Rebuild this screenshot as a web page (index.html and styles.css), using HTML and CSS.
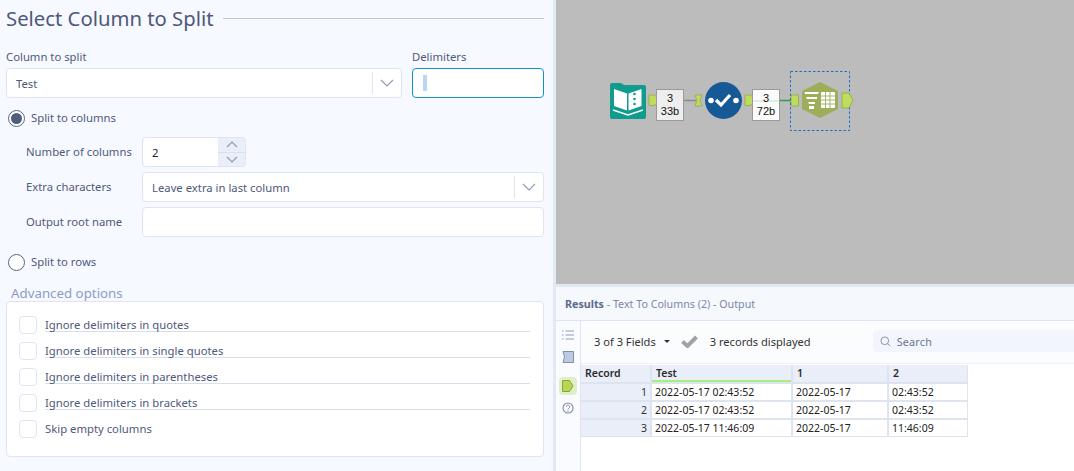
FILE: index.html
```html
<!DOCTYPE html>
<html lang="en">
<head>
<meta charset="utf-8">
<title>Text To Columns</title>
<link rel="stylesheet" href="styles.css">
</head>
<body>
<div class="app">
  <section class="config">
    <div class="title-row">
      <h1 class="title">Select Column to Split</h1>
      <span class="title-rule"></span>
    </div>
    <div class="top-fields">
      <div class="field-col">
        <label class="field-label">Column to split</label>
        <div class="select">
          <span class="select-value">Test</span>
          <span class="select-arrow"><svg width="14" height="8" viewBox="0 0 14 8"><path d="M1 1l6 6 6-6" class="chev"/></svg></span>
        </div>
      </div>
      <div class="field-col">
        <label class="field-label">Delimiters</label>
        <div class="input focused"><span class="caret"></span></div>
      </div>
    </div>
    <div class="radio-row first-radio">
      <span class="radio on"><span class="radio-dot"></span></span>
      <span class="radio-label">Split to columns</span>
    </div>
    <div class="sub-form">
      <span class="sub-label">Number of columns</span>
      <div class="spin">
        <span class="spin-value">2</span>
        <span class="spin-btns">
          <span class="spin-btn"><svg width="12" height="7" viewBox="0 0 12 7"><path d="M1 6l5-5 5 5" class="chev"/></svg></span>
          <span class="spin-btn"><svg width="12" height="7" viewBox="0 0 12 7"><path d="M1 1l5 5 5-5" class="chev"/></svg></span>
        </span>
      </div>
      <span class="sub-label">Extra characters</span>
      <div class="select">
        <span class="select-value">Leave extra in last column</span>
        <span class="select-arrow"><svg width="14" height="8" viewBox="0 0 14 8"><path d="M1 1l6 6 6-6" class="chev"/></svg></span>
      </div>
      <span class="sub-label">Output root name</span>
      <div class="input"></div>
    </div>
    <div class="radio-row second-radio">
      <span class="radio"></span>
      <span class="radio-label">Split to rows</span>
    </div>
    <div class="adv-title">Advanced options</div>
    <div class="adv-box">
      <div class="check-row"><span class="check"></span><span class="check-label ruled">Ignore delimiters in quotes</span></div>
      <div class="check-row"><span class="check"></span><span class="check-label ruled">Ignore delimiters in single quotes</span></div>
      <div class="check-row"><span class="check"></span><span class="check-label ruled">Ignore delimiters in parentheses</span></div>
      <div class="check-row"><span class="check"></span><span class="check-label ruled">Ignore delimiters in brackets</span></div>
      <div class="check-row"><span class="check"></span><span class="check-label">Skip empty columns</span></div>
    </div>
  </section>

  <section class="main">
    <div class="canvas">
      <svg class="workflow" width="518" height="284" viewBox="556 0 518 284">
        <!-- connections -->
        <path d="M684 100.500H696" class="wire-gray"/>
        <path d="M780 100.500H792" class="wire-green"/>
        <!-- input tool: book -->
        <path d="M610 85a2 2 0 0 1 2-2h9l3 2h20a2 2 0 0 1 2 2v30a2 2 0 0 1-2 2h-32a2 2 0 0 1-2-2z" fill="#0f9b8e"/>
        <path d="M614 89l13 4.500v17l-13-4.500z" fill="#fff"/>
        <path d="M628.500 93.500l13-4.500v17l-13 4.500z" fill="#fff"/>
        <path d="M613 110l15 5 15-5" fill="none" stroke="#fff" stroke-width="1.400"/>
        <circle cx="634.500" cy="94" r="1.300" fill="#0f9b8e"/><circle cx="634.500" cy="99" r="1.300" fill="#0f9b8e"/><circle cx="634.500" cy="104" r="1.300" fill="#0f9b8e"/>
        <path d="M649 95h5l3 2v6.500l-3 2h-5z" class="anchor"/>
        <!-- browse box 1 -->
        <rect x="656.500" y="89.500" width="27" height="31" fill="#eeeeee" stroke="#9a9a9a"/>
        <text x="670" y="101.500" class="count">3</text>
        <text x="670" y="114.500" class="count">33b</text>
        <path d="M695 95h7l-2 5.500 2 5.500h-7l2-5.500z" class="anchor"/>
        <!-- select tool -->
        <circle cx="723.500" cy="100.500" r="18.500" fill="#155a96"/>
        <circle cx="711" cy="100.500" r="2.800" fill="#fff"/>
        <circle cx="736" cy="100.500" r="2.800" fill="#fff"/>
        <path d="M716 100l5 5 9-10" fill="none" stroke="#fff" stroke-width="3.200"/>
        <path d="M745 95h5l3 2v6.500l-3 2h-5z" class="anchor"/>
        <!-- browse box 2 -->
        <rect x="752.500" y="89.500" width="27" height="31" fill="#fbfbfb" stroke="#9a9a9a"/>
        <rect x="753" y="100" width="26" height="2" fill="#dfeee2"/>
        <text x="766" y="101.500" class="count">3</text>
        <text x="766" y="114.500" class="count">72b</text>
        <path d="M791 95h7.500v11H791z" class="anchor"/>
        <!-- text to columns tool -->
        <path d="M820 82l18 9v18l-18 9-18-9V91z" fill="#9cae5a"/>
        <path d="M804.500 92h14.500l-1 2h-13zM806 97h11v2h-10zM808 102h7v2h-6zM809 106h5v3h-5z" fill="#fff"/>
        <rect x="821" y="92" width="14" height="16" rx="1" fill="#fff"/>
        <path d="M821 96h14M821 100h14M821 104h14M825.500 92v16M830 92v16" stroke="#9cae5a" stroke-width=".9"/>
        <rect x="790.500" y="71.500" width="59" height="59" fill="none" stroke="#1a6fc0" stroke-dasharray="2.500 2"/>
        <path d="M842 93h7l4 7.500-4 7.500h-7z" class="anchor"/>
      </svg>
    </div>
    <div class="results-bar">
      <span class="results-strong">Results</span><span class="results-path">&nbsp;- Text To Columns (2) - Output</span>
    </div>
    <div class="results-body">
      <aside class="side">
        <svg class="side-icon" width="14" height="12" viewBox="0 0 14 12"><path d="M1 2h1.500M1 6h1.500M1 10h1.500M4.500 2H13M4.500 6H13M4.500 10H13" stroke="#8ea0bd" stroke-width="1.200" fill="none"/></svg>
        <svg class="side-icon second" width="12" height="12" viewBox="0 0 12 12"><path d="M1 .5h10.500v11H1l1.500-5.500z" fill="#bcc9e0" stroke="#7f90ad"/></svg>
        <span class="side-active"><svg width="12" height="12" viewBox="0 0 12 12"><path d="M.5.5h7l3.500 5.500-3.500 5.500h-7z" fill="#b9d652" stroke="#8aa23c"/></svg></span>
        <svg class="side-icon" width="12" height="12" viewBox="0 0 12 12"><circle cx="6" cy="6" r="5" fill="none" stroke="#7f8ba3" stroke-width="1.100"/><path d="M4.300 4.700a1.700 1.700 0 1 1 2.600 1.500c-.6.400-.9.700-.9 1.200" fill="none" stroke="#7f8ba3"/><circle cx="6" cy="9" r=".7" fill="#7f8ba3"/></svg>
      </aside>
      <div class="results-main">
        <div class="toolbar">
          <span class="tb-text">3 of 3 Fields</span>
          <span class="tb-caret"></span>
          <svg class="tb-check" width="17" height="13" viewBox="0 0 17 13"><path d="M1.500 6.500l5 4.500L15.500 2" fill="none" stroke="#a3a3a3" stroke-width="4"/></svg>
          <span class="tb-text">3 records displayed</span>
          <div class="search">
            <svg width="11" height="11" viewBox="0 0 12 12"><circle cx="5.200" cy="5.200" r="4.200" fill="none" stroke="#7f8ba3"/><path d="M8.300 8.300L11 11" stroke="#7f8ba3"/></svg>
            <span class="search-text">Search</span>
          </div>
        </div>
        <div class="grid">
          <div class="th">Record</div><div class="th th-test">Test</div><div class="th">1</div><div class="th">2</div>
          <div class="rec">1</div><div class="td">2022-05-17 02:43:52</div><div class="td">2022-05-17</div><div class="td">02:43:52</div>
          <div class="rec">2</div><div class="td">2022-05-17 02:43:52</div><div class="td">2022-05-17</div><div class="td">02:43:52</div>
          <div class="rec">3</div><div class="td">2022-05-17 11:46:09</div><div class="td">2022-05-17</div><div class="td">11:46:09</div>
        </div>
      </div>
    </div>
  </section>
</div>
</body>
</html>
```
FILE: styles.css
```css
* { box-sizing: border-box; }
html, body { margin: 0; height: 100%; overflow: hidden; }
body { font-family: "Noto Sans", "Open Sans", sans-serif; font-size: 11.3px; color: #50597a; background: #fff; }
.app { display: flex; width: 1074px; height: 471px; }

.config { width: 553px; height: 471px; padding: 0 9px 0 6px; background: #f6f9ff; flex: none; }
.title-row { display: flex; align-items: center; gap: 10px; height: 37px; }
.title { margin: 0; font-size: 20.3px; font-weight: 400; line-height: 37px; color: #4f587a; white-space: nowrap; }
.title-rule { flex: 1; height: 1px; background: #c6c8cc; }

.top-fields { display: grid; grid-template-columns: 396px 132px; column-gap: 10px; margin-top: 11px; }
.field-label { display: block; height: 20px; line-height: 17px; }
.select, .input { height: 30px; background: #fff; border: 1px solid #dde5f3; border-radius: 4px; }
.select { display: flex; align-items: center; }
.select-value { flex: 1; padding-left: 9px; }
.select-arrow { width: 29px; height: 22px; border-left: 1px solid #dde5f3; display: flex; align-items: center; justify-content: center; }
.chev { fill: none; stroke: #8d9ab5; stroke-width: 1.100; }
.input.focused { border-color: #1590c6; display: flex; align-items: center; padding-left: 10px; }
.caret { width: 4px; height: 16px; background: #b7d6f8; }

.radio-row { display: flex; align-items: center; gap: 6px; padding-left: 2px; height: 18px; }
.radio-label { padding-bottom: 2px; }
.first-radio { margin-top: 11px; }
.second-radio { margin-top: 16px; }
.radio { width: 17px; height: 17px; border-radius: 50%; border: 1px solid #5a6480; background: #fff; display: flex; align-items: center; justify-content: center; }
.radio-dot { width: 11px; height: 11px; border-radius: 50%; background: #515d7d; }

.sub-form { display: grid; grid-template-columns: 116px 402px; row-gap: 5px; margin-top: 10px; padding-left: 20px; align-items: center; }
.sub-label { line-height: 30px; }
.spin { display: flex; width: 104px; height: 30px; background: #fff; border: 1px solid #dde5f3; border-radius: 4px; overflow: hidden; }
.spin-value { flex: 1; padding-left: 9px; line-height: 30px; color: #222; }
.spin-btns { width: 27px; display: flex; flex-direction: column; gap: 1px; background: #d8dfee; }
.spin-btn { flex: 1; display: flex; align-items: center; justify-content: center; background: #e9eef8; }

.adv-title { margin: 13px 0 0 5px; font-size: 13.3px; line-height: 18px; height: 17px; color: #8c9cc4; }
.adv-box { height: 156px; width: 538px; padding: 13px 13px 0 12px; background: #fff; border: 1px solid #dde5f3; border-radius: 4px; }
.check-row { display: flex; align-items: center; gap: 8px; height: 20px; margin-bottom: 6px; }
.check { width: 18px; height: 18px; flex: none; border: 1px solid #dde5f3; border-radius: 4px; background: #fff; }
.check-label { flex: 1; align-self: flex-start; height: 17px; line-height: 20px; }
.ruled { border-bottom: 1px solid #d6dfee; }

.main { flex: 1; min-width: 0; display: flex; flex-direction: column; border-left: 3px solid #e3e9f4; }
.canvas { height: 284px; background: #bcbcbc; flex: none; }
.workflow { display: block; }
.anchor { fill: #c0dc5c; stroke: #8fa84a; stroke-width: .8; }
.wire-gray { stroke: #8a8a8a; stroke-width: 1.500; fill: none; }
.wire-green { stroke: #2f9a58; stroke-width: 1.500; fill: none; }
.count { font-family: "Liberation Sans", sans-serif; font-size: 11px; fill: #111; text-anchor: middle; }

.results-bar { height: 37px; padding: 9px 0 0 9px; border-top: 3px solid #e3e9f4; border-bottom: 1px solid #dde5f3; background: #f5f8fd; font-size: 10.7px; line-height: 16px; white-space: nowrap; }
.results-strong { font-weight: 700; color: #5a6a8a; }
.results-path { color: #7b89a6; }

.results-body { flex: 1; display: flex; min-height: 0; }
.side { width: 25px; flex: none; display: flex; flex-direction: column; align-items: center; padding-top: 8px; border-right: 1px solid #dde5f3; background: #fafbfe; }
.side-icon { display: block; margin-bottom: 10px; }
.side-icon.second { margin-bottom: 14px; }
.side-active { width: 18px; height: 18px; margin-bottom: 7px; display: flex; align-items: center; justify-content: center; background: #dff0c8; border-radius: 4px; }

.results-main { flex: 1; min-width: 0; overflow: hidden; }
.toolbar { height: 43px; display: flex; align-items: center; padding: 0 0 2px 13px; background: #fbfcfe; border-bottom: 1px solid #eef1f7; color: #333; font-size: 11.1px; white-space: nowrap; }
.tb-text { flex: none; }
.tb-caret { flex: none; margin-left: 8px; border: 3px solid transparent; border-top: 3px solid #333; border-bottom: 0; }
.tb-check { flex: none; margin: 0 12px 0 11px; }
.search { display: flex; align-items: center; gap: 6px; width: 210px; height: 22px; margin-left: 62px; padding-left: 7px; background: #f2f5fb; border-radius: 4px; color: #6b7690; flex: none; }
.search-text { font-size: 10.8px; letter-spacing: .2px; }

.grid { display: grid; grid-template-columns: 69px 139px 94px 78px; grid-template-rows: 17px 16px 16px 16px; gap: 2px; width: max-content; margin-top: 1px; padding: 0 1px 1px 0; background: #dde4f0; font-size: 10.5px; color: #222; }
.th { padding-left: 4px; font-weight: 600; background: #e9eef8; line-height: 17px; color: #2b2b2b; }
.th-test { border-bottom: 2px solid #a4f07a; }
.rec { padding-right: 3px; text-align: right; background: #e9eef8; line-height: 16px; color: #333; }
.td { padding-left: 3px; background: #fff; line-height: 16px; }
```
